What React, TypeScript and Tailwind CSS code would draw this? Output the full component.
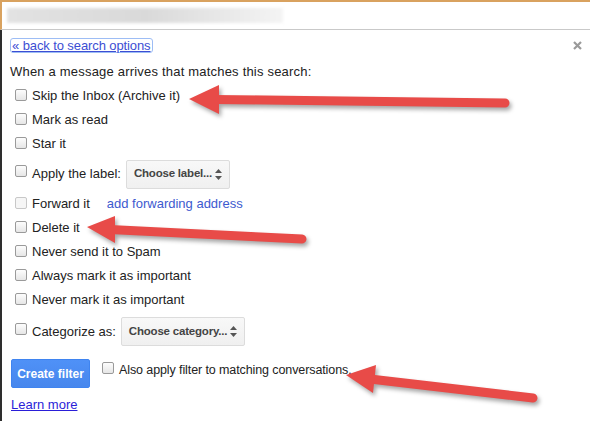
import React from "react";

// small gmail-ish checkbox
function Box({ dim = false, className = "" }: { dim?: boolean; className?: string }) {
  return (
    <span
      className={`inline-block w-[12px] h-[12px] shrink-0 rounded-[2px] border ${
        dim ? "border-[#c8c8c8] bg-[#f6f6f6]" : "border-[#9a9a9a] bg-gradient-to-b from-[#fdfdfd] to-[#e6e6e6]"
      } ${className}`}
    />
  );
}

function Select({ label, width }: { label: string; width: string }) {
  return (
    <div
      className={`${width} h-[29px] shrink-0 flex items-center justify-between pl-[7px] pr-[7px] rounded-[2px] border border-[#dcdcdc] bg-gradient-to-b from-[#f8f8f8] to-[#f0f0f0] text-[11.5px] font-bold text-[#444] whitespace-nowrap`}
    >
      <span className="tracking-[-0.2px]">{label}</span>
      <svg width="7" height="11" viewBox="0 0 7 11" className="shrink-0">
        <path d="M3.5 0 L7 4 L0 4 Z" fill="#555" />
        <path d="M3.5 11 L7 7 L0 7 Z" fill="#555" />
      </svg>
    </div>
  );
}

function Row({ children, dim = false }: { children: React.ReactNode; dim?: boolean }) {
  return (
    <div className="h-[24px] flex items-center">
      <Box dim={dim} className="ml-[5px] mr-[5px] mb-[2px]" />
      {children}
    </div>
  );
}

function Arrows() {
  const red = "#e84b48";
  return (
    <svg
      className="absolute inset-0 pointer-events-none"
      width="590"
      height="421"
      viewBox="0 0 590 421"
      style={{ filter: "drop-shadow(2px 3px 2px rgba(0,0,0,0.35))" }}
    >
      {/* skip the inbox */}
      <line x1="214" y1="99.5" x2="505" y2="103" stroke={red} strokeWidth="9" strokeLinecap="round" />
      <path d="M189 99 L219 85 L219 114 Z" fill={red} />
      {/* delete it */}
      <line x1="110" y1="229.5" x2="302" y2="239" stroke={red} strokeWidth="9" strokeLinecap="round" />
      <path d="M87 227 L115 216 L115 243 Z" fill={red} />
      {/* also apply */}
      <line x1="370" y1="379" x2="533" y2="398" stroke={red} strokeWidth="9" strokeLinecap="round" />
      <path d="M346 375 L376 365 L373 393 Z" fill={red} />
    </svg>
  );
}

export default function App() {
  return (
    <div className="relative w-[590px] h-[421px] overflow-hidden bg-white text-[13px] text-[#222] font-['Liberation_Sans',Arial,sans-serif]">
      {/* window top with blurred subject */}
      <div className="h-[30px] border-t-2 border-l-2 border-[#d9a25f] border-b border-b-[#c9c9c9] pl-[5px] pt-[6px]">
        <div className="w-[276px] h-[15px] bg-gradient-to-r from-[#e2e2e2] via-[#d9d9d9] to-[#f4f4f4] blur-[1.5px]" />
      </div>

      <div className="h-[391px] border-l-2 border-[#2e2e2e] pl-[8px] flex flex-col">
        <div className="pt-[8px] flex items-start justify-between pr-[8px]">
          <span className="h-[15px] leading-[13px] px-[1px] rounded-[3px] border border-[#9dbdf5] text-[#3c4ed3] underline tracking-[-0.1px]">
            « back to search options
          </span>
          <svg width="9" height="9" viewBox="0 0 9 9" className="mt-[3px]">
            <path d="M1 1 L8 8 M8 1 L1 8" stroke="#9a9a9a" strokeWidth="2.2" />
          </svg>
        </div>

        <div className="mt-[7px] h-[24px] flex items-center tracking-[0.2px]">
          When a message arrives that matches this search:
        </div>

        <Row>Skip the Inbox (Archive it)</Row>
        <Row>Mark as read</Row>
        <Row>Star it</Row>
        <div className="h-[36px] flex items-center">
          <Box className="ml-[5px] mr-[5px] mb-[6px]" />
          <span className="mr-[5px]">Apply the label:</span>
          <Select label="Choose label..." width="w-[104px]" />
        </div>
        <Row dim>
          <span>Forward it</span>
          <span className="ml-[17px] text-[#3d5acf]">add forwarding address</span>
        </Row>
        <Row>Delete it</Row>
        <Row>Never send it to Spam</Row>
        <Row>Always mark it as important</Row>
        <Row>Never mark it as important</Row>
        <div className="h-[39px] flex items-center">
          <Box className="ml-[5px] mr-[5px] mb-[6px]" />
          <span className="mr-[5px]">Categorize as:</span>
          <Select label="Choose category..." width="w-[124px]" />
        </div>

        <div className="mt-[8px] flex items-start">
          <div className="ml-[1px] w-[79px] h-[29px] flex items-center justify-center rounded-[2px] border border-[#3f84f0] bg-gradient-to-b from-[#4f91f7] to-[#4787ed] text-white text-[12px] font-bold">
            Create filter
          </div>
          <Box className="ml-[12px] mt-[3px]" />
          <span className="ml-[5px] mt-[4px] leading-[15px] text-[12.5px] tracking-[-0.1px]">
            Also apply filter to matching conversations.
          </span>
        </div>

        <div className="mt-[7px] ml-[1px]">
          <span className="text-[#2a1ed8] underline leading-[15px]">Learn more</span>
        </div>
      </div>

      <Arrows />
    </div>
  );
}
